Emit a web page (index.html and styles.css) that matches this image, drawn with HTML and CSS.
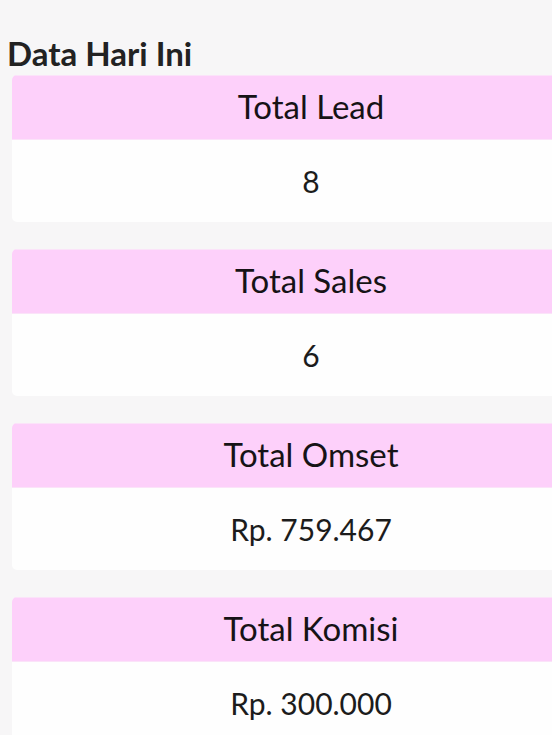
FILE: index.html
```html
<!DOCTYPE html>
<html>
<head>
<meta charset="utf-8">
<link rel="stylesheet" href="styles.css">
</head>
<body>
<div class="page">
  <h2 class="title">Data Hari Ini</h2>
  <div class="list">
    <div class="card">
      <div class="card-head">Total Lead</div>
      <div class="card-body">8</div>
    </div>
    <div class="card">
      <div class="card-head">Total Sales</div>
      <div class="card-body">6</div>
    </div>
    <div class="card">
      <div class="card-head">Total Omset</div>
      <div class="card-body">Rp. 759.467</div>
    </div>
    <div class="card">
      <div class="card-head">Total Komisi</div>
      <div class="card-body">Rp. 300.000</div>
    </div>
  </div>
</div>
</body>
</html>
```
FILE: styles.css
```css
html, body {
  margin: 0;
  padding: 0;
  background: #f7f6f7;
  overflow: hidden;
}
body {
  font-family: Lato, "Noto Sans", sans-serif;
  color: #1f1f1f;
}
.page {
  width: 622px;
  padding-top: 34px;
}
.title {
  margin: 0 0 0 7px;
  font-size: 33px;
  font-weight: 700;
  line-height: 38px;
  color: #222;
}
.list {
  display: flex;
  flex-direction: column;
  gap: 27px;
  margin: 3px 0 0 12px;
  width: 598px;
}
.card {
  background: #fefefe;
  border-radius: 5px;
  overflow: hidden;
}
.card-head {
  background: #fdd0fa;
  height: 65px;
  display: flex;
  align-items: center;
  justify-content: center;
  font-size: 33px;
  color: #161316;
  border-top: 1px solid #fbe3f9;
  border-bottom: 1px solid #fbe3f9;
  box-sizing: border-box;
  padding-bottom: 4px;
}
.card-body {
  height: 82px;
  display: flex;
  align-items: center;
  justify-content: center;
  font-size: 30px;
  color: #1c1c1c;
}
```
